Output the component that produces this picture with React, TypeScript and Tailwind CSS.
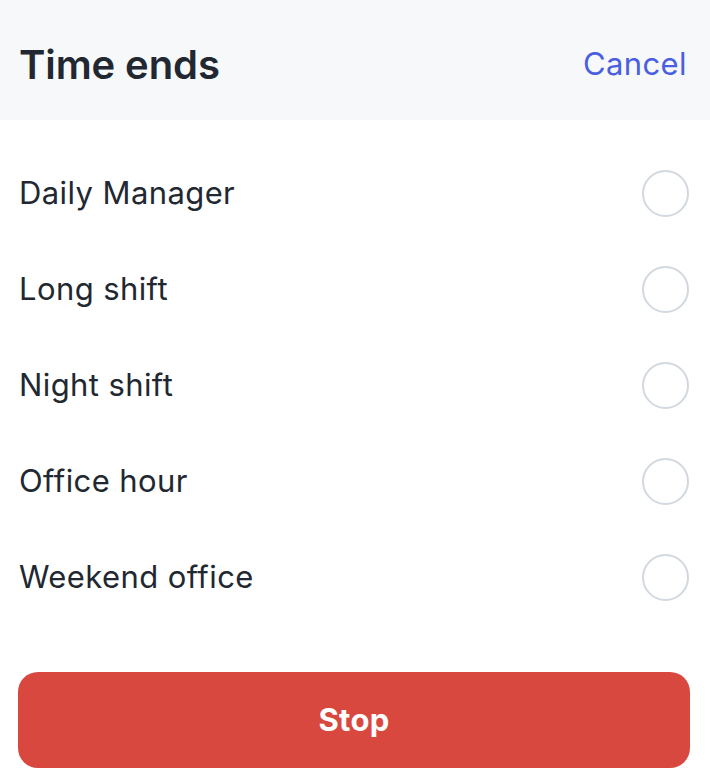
import { useState } from "react";

const shifts = [
  "Daily Manager",
  "Long shift",
  "Night shift",
  "Office hour",
  "Weekend office",
];

export default function App() {
  const [picked, setPicked] = useState<string | null>(null);

  return (
    <div className="w-[710px] h-[779px] bg-white font-['Inter',sans-serif] text-[#222831] flex flex-col">
      <div className="h-[120px] bg-[#f7f8fa] flex items-center justify-between pl-[19px] pr-[23px] pt-[9px]">
        <h1 className="text-[40px] font-semibold tracking-[-0.1px]">Time ends</h1>
        <button className="text-[31px] text-[#4a5fe0] tracking-[0.4px]">Cancel</button>
      </div>

      <div className="flex flex-col pt-[25px]">
        {shifts.map((name) => (
          <label
            key={name}
            className="h-[96px] flex items-center justify-between pl-[19px] pr-[21px] cursor-pointer"
          >
            <span className="text-[31px] tracking-[0.4px]">{name}</span>
            <input
              type="radio"
              name="shift"
              checked={picked === name}
              onChange={() => setPicked(name)}
              className="appearance-none w-[47px] h-[47px] rounded-full border-[2.5px] border-[#d3d8df]"
            />
          </label>
        ))}
      </div>

      <div className="pl-[18px] pr-[20px] pt-[47px]">
        <button className="w-full h-[96px] rounded-[20px] bg-[#d9483f] text-white text-[31px] font-bold tracking-[0.3px]">
          Stop
        </button>
      </div>
    </div>
  );
}
